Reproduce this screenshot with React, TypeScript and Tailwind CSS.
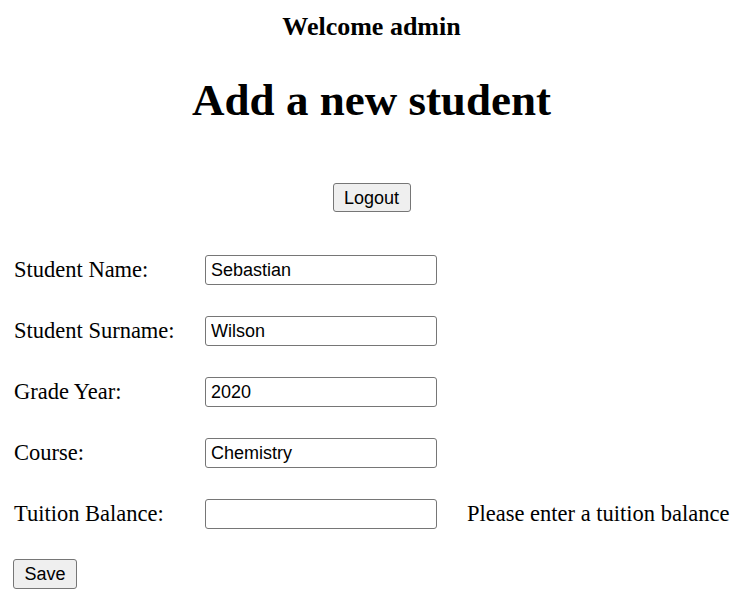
export default function App() {
  const fields = [
    { label: 'Student Name:', value: 'Sebastian' },
    { label: 'Student Surname:', value: 'Wilson' },
    { label: 'Grade Year:', value: '2020' },
    { label: 'Course:', value: 'Chemistry' },
    { label: 'Tuition Balance:', value: '', error: 'Please enter a tuition balance' },
  ];

  return (
    <div className="min-h-screen bg-white text-black font-['Liberation_Serif','Times_New_Roman',serif]">
      <h3 className="pt-[12px] text-center text-[26px] leading-[30px] font-bold">Welcome admin</h3>
      <h1 className="mt-[33px] text-center text-[45px] leading-[51px] font-bold">Add a new student</h1>
      <div className="mt-[57px] flex justify-center">
        <button
          type="button"
          className="w-[78px] h-[29px] bg-[#efefef] border border-[#767676] rounded-[3px] font-['Liberation_Sans',Arial,sans-serif] text-[18px] leading-none text-black"
        >
          Logout
        </button>
      </div>

      <form className="mt-[43px] pl-[13px] flex flex-col gap-[31px]">
        {fields.map((f) => (
          <div key={f.label} className="flex items-center h-[30px]">
            <label className="w-[192px] pl-[1px] text-[22.5px] leading-[30px]">{f.label}</label>
            <input
              type="text"
              defaultValue={f.value}
              className="w-[232px] h-[30px] border border-[#767676] rounded-[3px] px-[5px] font-['Liberation_Sans',Arial,sans-serif] text-[18px] text-black outline-none"
            />
            {f.error && <span className="ml-[30px] text-[22.5px] leading-[30px]">{f.error}</span>}
          </div>
        ))}
      </form>

      <div className="mt-[30px] pl-[13px]">
        <button
          type="button"
          className="w-[64px] h-[30px] bg-[#efefef] border border-[#767676] rounded-[3px] font-['Liberation_Sans',Arial,sans-serif] text-[18px] leading-none text-black"
        >
          Save
        </button>
      </div>
    </div>
  );
}
